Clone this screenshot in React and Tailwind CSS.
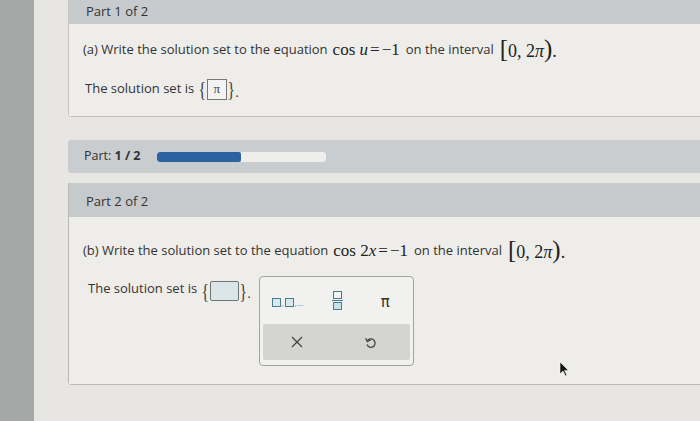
import React from "react";

const sans = { fontFamily: '"Open Sans", "Liberation Sans", sans-serif' };

function MathText({ children }) {
  return (
    <span className="font-['Liberation_Serif',serif] text-[17px] text-[#222]">{children}</span>
  );
}

function Eq() {
  return <span className="mx-[2px]">=</span>;
}

function Interval() {
  return (
    <span className="font-['Liberation_Serif',serif] text-[#222] ml-[6px]">
      <span className="text-[25px] leading-none">[</span>
      <span className="text-[18px]">0, 2</span>
      <span className="text-[18px] italic">π</span>
      <span className="text-[25px] leading-none">)</span>
      <span className="text-[18px]">.</span>
    </span>
  );
}

function Brace({ children }) {
  return (
    <span className="inline-flex items-center font-['Liberation_Serif',serif] text-[#444]">
      <span className="text-[22px] leading-none font-light -mr-[1px] scale-x-75">{"{"}</span>
      {children}
      <span className="text-[22px] leading-none font-light -ml-[1px] scale-x-75">{"}"}</span>
      <span className="text-[14px] mt-[6px] -ml-[1px]">.</span>
    </span>
  );
}

function Toolbar() {
  return (
    <div className="w-[155px] h-[90px] border border-[#9ea4a4] rounded-[4px] bg-[#f1f1ef] p-[3px] flex flex-col">
      <div className="relative h-[44px]">
        <span className="absolute left-[9px] top-[18px] flex items-end gap-[1px]">
          <span className="w-[9px] h-[9px] border border-[#4a7c90] bg-[#d7e7ec]" />
          <span className="text-[8px] leading-none text-[#4a7c90]">,</span>
          <span className="w-[9px] h-[9px] border border-[#4a7c90] bg-[#d7e7ec]" />
          <span className="text-[8px] leading-none text-[#4a7c90]">,...</span>
        </span>
        <span className="absolute left-[69px] top-[11px] flex flex-col items-center gap-[1px]">
          <span className="w-[9px] h-[8px] border border-[#4a7c90] bg-[#eef3f4]" />
          <span className="w-[11px] h-[1px] bg-[#4a7c90]" />
          <span className="w-[9px] h-[8px] border border-[#4a7c90] bg-[#c9e2e8]" />
        </span>
        <span className="absolute left-[118px] top-[11px] font-['DejaVu_Sans',sans-serif] text-[15px] text-[#333]">π</span>
      </div>
      <div className="h-[36px] bg-[#d4d5d3] rounded-[2px] flex items-center">
        <span className="w-[68px] flex justify-center">
          <svg width="12" height="12" viewBox="0 0 12 12">
            <path d="M1 1L11 11M11 1L1 11" stroke="#444" strokeWidth="1.3" />
          </svg>
        </span>
        <span className="w-[80px] flex justify-center">
          <svg width="13" height="13" viewBox="0 0 14 14" fill="none">
            <path d="M3.5 5.5A4.5 4.5 0 1 1 3.2 9.2" stroke="#444" strokeWidth="1.4" />
            <path d="M1.8 2.5L3.6 6L7 4.3" stroke="#444" strokeWidth="1.4" />
          </svg>
        </span>
      </div>
    </div>
  );
}

export default function App() {
  return (
    <div className="w-[700px] h-[421px] overflow-hidden flex bg-[#e7e6e3] text-[#333]" style={sans}>
      <div className="w-[34px] shrink-0 bg-[#a4a9a8]" />
      <div className="flex-1 pl-[34px] relative">
        <div className="border-l border-b border-[#c3c3c0] rounded-bl-[4px]">
          <div className="h-[24px] bg-[#c7cbcd] pl-[17px] text-[13px] leading-[22px]">Part 1 of 2</div>
          <div className="h-[92px] bg-[#eeedea] pl-[14px] pt-[13px]">
            <div className="flex items-center h-[26px] text-[13px]">
              <span>(a) Write the solution set to the equation</span>
              <span className="ml-[5px]">
                <MathText>
                  cos <i>u</i>
                  <Eq />−1
                </MathText>
              </span>
              <span className="ml-[6px]">on the interval</span>
              <Interval />
            </div>
            <div className="flex items-center h-[28px] mt-[12px] pl-[2px] text-[13px]">
              <span className="mr-[3px]">The solution set is</span>
              <Brace>
                <span className="w-[20px] h-[21px] border border-[#777] bg-[#f3f3f1] flex items-center justify-center text-[13px]">
                  π
                </span>
              </Brace>
            </div>
          </div>
        </div>

        <div className="mt-[23px] h-[33px] bg-[#c9cdcf] rounded-l-[3px] flex items-center pl-[16px] text-[12.5px]">
          <span>
            Part: <b>1 / 2</b>
          </span>
          <div className="ml-[16px] w-[169px] h-[10px] bg-[#eeeeec] rounded-[3px] overflow-hidden">
            <div className="h-full bg-[#2a63a0] rounded-[2px]" style={{ width: "50%" }} />
          </div>
        </div>

        <div className="mt-[10px] border-l border-b border-[#b9b9b6] rounded-bl-[4px]">
          <div className="h-[34px] bg-[#c7cacc] pl-[17px] text-[13px] leading-[36px]">Part 2 of 2</div>
          <div className="h-[167px] bg-[#eeede9] pl-[14px] pt-[21px]">
            <div className="flex items-center h-[26px] text-[13px]">
              <span>(b) Write the solution set to the equation</span>
              <span className="ml-[5px]">
                <MathText>
                  cos 2<i>x</i>
                  <Eq />−1
                </MathText>
              </span>
              <span className="ml-[6px]">on the interval</span>
              <Interval />
            </div>
            <div className="flex items-start mt-[13px] pl-[5px] text-[13px]">
              <span className="mr-[3px] mt-[2px]">The solution set is</span>
              <Brace>
                <span className="w-[29px] h-[20px] border border-[#6b7679] bg-[#dce5e7] rounded-[2px]" />
              </Brace>
              <div className="ml-[8px] mt-[-1px]">
                <Toolbar />
              </div>
            </div>
          </div>
        </div>

        <svg className="absolute left-[524px] top-[361px]" width="12" height="16" viewBox="0 0 12 16">
          <path d="M2 1L2 13L5 10L7.5 15L9 14.3L6.6 9.4L10.5 9.4Z" fill="#111" stroke="#fff" strokeWidth="0.6" />
        </svg>
      </div>
    </div>
  );
}
